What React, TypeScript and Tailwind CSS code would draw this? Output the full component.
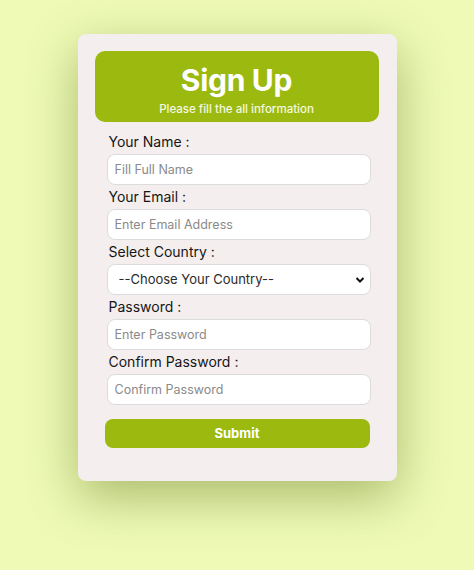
import React from 'react';

const fields = [
  { label: 'Your Name :', placeholder: 'Fill Full Name', type: 'text' },
  { label: 'Your Email :', placeholder: 'Enter Email Address', type: 'email' },
  { label: 'Select Country :', placeholder: '', type: 'select' },
  { label: 'Password :', placeholder: 'Enter Password', type: 'password' },
  { label: 'Confirm Password :', placeholder: 'Confirm Password', type: 'password' },
];

const App: React.FC = () => {
  return (
    <div
      className="min-h-[570px] w-full bg-[#eefab6] pt-[34px] flex justify-center"
      style={{ fontFamily: 'Inter, "Noto Sans", sans-serif' }}
    >
      <div className="w-[319px] h-[447px] bg-[#f4eeee] rounded-[8px] pt-[17px] pl-[17px] pr-[18px] pb-[34px] shadow-[0_16px_50px_rgba(90,110,20,0.45)]">
        <div className="bg-[#9cb90f] rounded-[10px] h-[71px] pt-[11px] flex flex-col items-center">
          <h1 className="text-[30px] leading-[36px] font-bold text-white tracking-[-0.3px]">Sign Up</h1>
          <p className="text-[11.5px] leading-[14px] mt-[4px] font-medium text-[#f5f9e0]">
            Please fill the all information
          </p>
        </div>

        <form className="mt-[9px] pl-[12px] pr-[8px] flex flex-col gap-[1px]">
          {fields.map((f) => (
            <div key={f.label} className="flex flex-col">
              <label className="text-[14px] leading-[21px] mb-[2px] pl-[2px] text-[#161616] font-normal">
                {f.label}
              </label>
              {f.type === 'select' ? (
                <div className="relative h-[31px] bg-white rounded-[8px] border border-[#dcdcdc]">
                  <select className="appearance-none w-full h-full bg-transparent pl-[11px] text-[13px] text-[#2a2a2a] outline-none">
                    <option>--Choose Your Country--</option>
                  </select>
                  <svg
                    className="absolute right-[5px] top-[11px] pointer-events-none"
                    width="10"
                    height="8"
                    viewBox="0 0 10 8"
                  >
                    <path d="M1.5 2 L5 5.5 L8.5 2" fill="none" stroke="#111" strokeWidth="2" />
                  </svg>
                </div>
              ) : (
                <input
                  type={f.type}
                  placeholder={f.placeholder}
                  className="h-[31px] bg-white rounded-[8px] border border-[#dcdcdc] px-[7px] text-[12.5px] placeholder:text-[#8a8a8a] outline-none"
                />
              )}
            </div>
          ))}

          <button
            type="button"
            className="mt-[13px] -ml-[2px] mr-[1px] h-[29px] rounded-[8px] bg-[#9cb90f] text-white text-[13px] font-bold"
          >
            Submit
          </button>
        </form>
      </div>
    </div>
  );
};

export default App;
